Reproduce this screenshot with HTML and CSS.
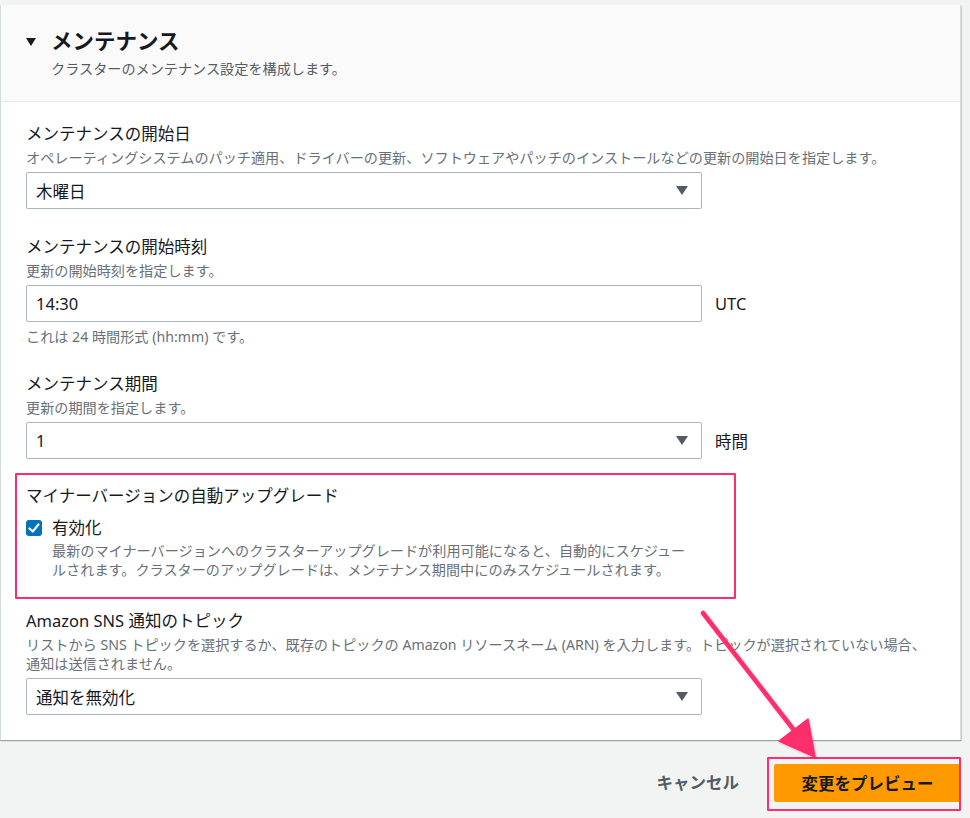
FILE: index.html
```html
<!DOCTYPE html>
<html lang="ja">
<head>
<meta charset="utf-8">
<title>メンテナンス</title>
<link rel="stylesheet" href="styles.css">
</head>
<body>
<div class="page">
  <section class="card">
    <header class="card-header">
      <div class="title-row">
        <svg class="expand-icon" viewBox="0 0 10 8" width="10" height="8"><polygon points="0,0 10,0 5,8"/></svg>
        <h2 class="title">メンテナンス</h2>
      </div>
      <p class="subtitle">クラスターのメンテナンス設定を構成します。</p>
    </header>

    <div class="card-body">
      <div class="field field-first">
        <div class="label">メンテナンスの開始日</div>
        <div class="desc">オペレーティングシステムのパッチ適用、ドライバーの更新、ソフトウェアやパッチのインストールなどの更新の開始日を指定します。</div>
        <div class="control-row">
          <div class="select">
            <span>木曜日</span>
            <svg class="caret" viewBox="0 0 12 9" width="12" height="9"><polygon points="0,0 12,0 6,9"/></svg>
          </div>
        </div>
      </div>

      <div class="field">
        <div class="label">メンテナンスの開始時刻</div>
        <div class="desc">更新の開始時刻を指定します。</div>
        <div class="control-row">
          <div class="input"><span>14:30</span></div>
          <span class="suffix">UTC</span>
        </div>
        <div class="hint">これは 24 時間形式 (hh:mm) です。</div>
      </div>

      <div class="field">
        <div class="label">メンテナンス期間</div>
        <div class="desc">更新の期間を指定します。</div>
        <div class="control-row">
          <div class="select">
            <span>1</span>
            <svg class="caret" viewBox="0 0 12 9" width="12" height="9"><polygon points="0,0 12,0 6,9"/></svg>
          </div>
          <span class="suffix">時間</span>
        </div>
      </div>

      <div class="highlight">
        <div class="label">マイナーバージョンの自動アップグレード</div>
        <div class="check-row">
          <span class="checkbox">
            <svg viewBox="0 0 16 16" width="16" height="16"><polyline points="3.5,8.5 6.8,11.5 12.5,4.5" fill="none" stroke="#fff" stroke-width="2.2" stroke-linecap="round" stroke-linejoin="round"/></svg>
          </span>
          <span class="check-label">有効化</span>
        </div>
        <div class="desc check-desc">最新のマイナーバージョンへのクラスターアップグレードが利用可能になると、自動的にスケジュールされます。クラスターのアップグレードは、メンテナンス期間中にのみスケジュールされます。</div>
      </div>

      <div class="field field-sns">
        <div class="label">Amazon SNS 通知のトピック</div>
        <div class="desc sns-desc">リストから SNS トピックを選択するか、既存のトピックの Amazon リソースネーム (ARN) を入力します。トピックが選択されていない場合、通知は送信されません。</div>
        <div class="control-row">
          <div class="select">
            <span>通知を無効化</span>
            <svg class="caret" viewBox="0 0 12 9" width="12" height="9"><polygon points="0,0 12,0 6,9"/></svg>
          </div>
        </div>
      </div>
    </div>
  </section>

  <div class="footer">
    <button class="btn-cancel" type="button">キャンセル</button>
    <div class="primary-wrap">
      <button class="btn-primary" type="button">変更をプレビュー</button>
    </div>
  </div>

  <svg class="annotation-arrow" width="970" height="818" viewBox="0 0 970 818">
    <defs>
      <filter id="sh" x="-20%" y="-20%" width="140%" height="140%">
        <feDropShadow dx="1" dy="1" stdDeviation="1" flood-color="#000" flood-opacity="0.25"/>
      </filter>
    </defs>
    <g filter="url(#sh)" fill="#fe2d6c" stroke="#fe2d6c">
      <line x1="703" y1="613" x2="797" y2="734" stroke-width="4.5" stroke-linecap="round"/>
      <polygon points="815,757 808,719 779,741" stroke-width="1.5" stroke-linejoin="round"/>
    </g>
  </svg>
</div>
</body>
</html>
```

FILE: styles.css
```css
html, body {
  margin: 0;
  padding: 0;
}

body {
  background: #f2f3f3;
  font-family: "Noto Sans", "Noto Sans CJK JP", sans-serif;
  color: #16191f;
}

.page {
  position: relative;
  width: 970px;
  height: 818px;
  overflow: hidden;
  padding-top: 5px;
  box-sizing: border-box;
}

.card {
  width: 961px;
  box-sizing: border-box;
  background: #ffffff;
  border-left: 1px solid #d5dbdb;
  border-right: 1px solid #d5dbdb;
  box-shadow: 0 1px 1px rgba(0, 28, 36, 0.3), 1px 1px 1px rgba(0, 28, 36, 0.1);
}

.card-header {
  background: #fafafa;
  border-bottom: 1px solid #eaeded;
  padding: 22px 25px 23px 25px;
}

.title-row {
  display: flex;
  align-items: center;
  height: 28px;
}

.expand-icon {
  fill: #16191f;
  margin-right: 15px;
  margin-top: 1px;
}

.title {
  margin: 0;
  font-size: 21.5px;
  font-weight: 700;
  line-height: 28px;
}

.subtitle {
  margin: 4px 0 0 25px;
  font-size: 14.15px;
  line-height: 19px;
  color: #545b64;
}

.card-body {
  padding: 21px 25px 25px 25px;
}

.field {
  margin-top: 27px;
}

.field-first {
  margin-top: 0;
}

.label {
  font-size: 16.5px;
  line-height: 22px;
  color: #16191f;
}

.desc {
  margin-top: 3px;
  font-size: 14.15px;
  line-height: 19px;
  color: #687078;
}

.control-row {
  display: flex;
  align-items: center;
  margin-top: 5px;
}

.select,
.input {
  width: 676px;
  height: 37px;
  box-sizing: border-box;
  border: 1px solid #aab7b8;
  border-radius: 2px;
  background: #ffffff;
  display: flex;
  align-items: center;
  justify-content: space-between;
  padding: 0 13px 0 9px;
  font-size: 16.5px;
  color: #16191f;
}

.caret {
  fill: #545b64;
}

.suffix {
  margin-left: 13px;
  font-size: 16.5px;
  color: #16191f;
}

.hint {
  margin-top: 5px;
  font-size: 14.15px;
  line-height: 19px;
  color: #687078;
}

.highlight {
  margin-top: 14px;
  margin-left: -11px;
  width: 721px;
  box-sizing: border-box;
  border: 2px solid #fe2d6c;
  border-radius: 1px;
  padding: 10px 9px 18px 9px;
}

.check-row {
  display: flex;
  align-items: center;
  margin-top: 10px;
  height: 22px;
}

.checkbox {
  width: 16px;
  height: 16px;
  border-radius: 3px;
  background: #0073bb;
  display: inline-flex;
}

.check-label {
  margin-left: 10px;
  font-size: 16.5px;
  line-height: 22px;
}

.check-desc {
  margin-top: 2px;
  margin-left: 26px;
  width: 638px;
}

.field-sns {
  margin-top: 11px;
}

.sns-desc {
  width: 909px;
}

.footer {
  width: 961px;
  margin-top: 24px;
  display: flex;
  justify-content: flex-end;
  align-items: center;
  gap: 35px;
}

.btn-cancel {
  border: none;
  background: transparent;
  padding: 0;
  font-family: inherit;
  font-size: 16.5px;
  font-weight: 700;
  line-height: 38px;
  color: #545b64;
}

.primary-wrap {
  position: relative;
}

.primary-wrap::after {
  content: "";
  position: absolute;
  top: -7px;
  left: -7px;
  right: 0;
  bottom: -9px;
  border: 2px solid #fe2d6c;
  border-radius: 1px;
}

.btn-primary {
  display: block;
  height: 38px;
  width: 187px;
  border: none;
  border-radius: 2px;
  background: #ff9900;
  font-family: inherit;
  font-size: 16.5px;
  font-weight: 700;
  color: #16191f;
  padding: 0;
}

.annotation-arrow {
  position: absolute;
  left: 0;
  top: 0;
  pointer-events: none;
}
```
